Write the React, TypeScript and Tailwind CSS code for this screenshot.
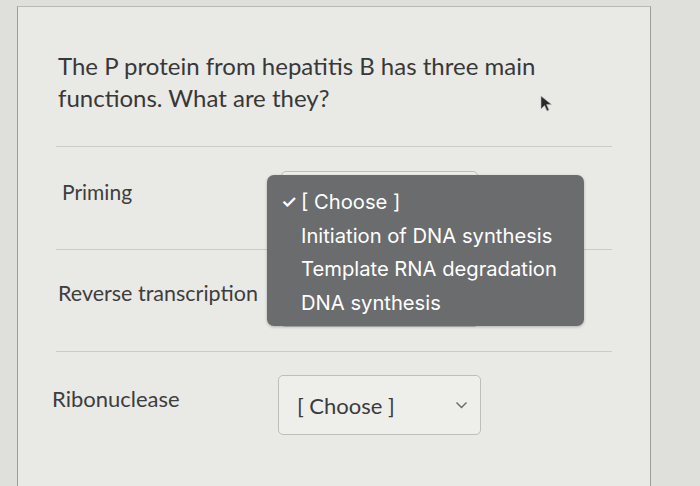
import React from "react";

const lato = { fontFamily: "Lato, 'Open Sans', sans-serif" } as const;

function Select({ w = "w-[203px]", covered = false }: { w?: string; covered?: boolean }) {
  return (
    <div className={`flex h-[60px] ${w} items-center justify-between rounded-[5px] border border-[#bdbdba] bg-[#eeeeeb] pl-[18px] pr-[12px]`}>
      <span className={`text-[22px] text-[#3b3b3b] ${covered ? "invisible" : ""}`}>[ Choose ]</span>
      <svg width="13" height="8" viewBox="0 0 13 8" fill="none">
        <path d="M1.5 1.5 L6.5 6.5 L11.5 1.5" stroke="#666" strokeWidth="1.4" />
      </svg>
    </div>
  );
}

export default function App() {
  return (
    <div
      className="relative h-[486px] w-[700px] overflow-hidden bg-[#dfdfdc] pt-[6px]"
      style={lato}
    >
      <div className="ml-[17px] h-[480px] w-[634px] border-x border-t border-x-[#9d9d9b] border-t-[#b9b9b7] bg-[#e9e9e6] px-[38px] pt-[43px]">
        <p className="w-[520px] pl-[2px] text-[24px] leading-[32px] text-[#383838]">
          The P protein from hepatitis B has three main functions. What are they?
        </p>
        <div className="mt-[32px] h-px bg-[#cbcbc8]" />

        <div className="flex h-[102px] items-start pt-[24px]">
          <span className="w-[225px] pl-[6px] pt-[7px] text-[21px] leading-[28px] text-[#3d3d3d]">Priming</span>
          <Select w="w-[197px]" covered />
        </div>
        <div className="h-px bg-[#cbcbc8]" />
        <div className="flex h-[101px] items-start pt-[17px]">
          <span className="w-[224px] pl-[2px] pt-[12px] text-[21.5px] leading-[28px] text-[#3d3d3d]">Reverse transcription</span>
          <Select w="w-[199px]" covered />
        </div>
        <div className="h-px bg-[#cbcbc8]" />
        <div className="flex items-start pt-[23px]">
          <span className="ml-[-4px] w-[226px] pt-[10px] text-[22px] leading-[28px] text-[#3d3d3d]">Ribonuclease</span>
          <Select />
        </div>
      </div>

      {/* dropdown menu */}
      <div
        className="absolute left-[267px] top-[175px] h-[151px] w-[317px] rounded-[7px] bg-[#6a6c6e] pt-[10px] text-[20.2px] leading-[33.5px] text-white shadow-[0_1px_3px_rgba(0,0,0,0.25)]"
        style={{ fontFamily: "Inter, 'Open Sans', sans-serif" }}
      >
        <div className="flex items-center">
          <span className="w-[34px] pl-[14px] text-[18px] font-semibold">✓</span>
          <span>[ Choose ]</span>
        </div>
        <div className="pl-[34px]">Initiation of DNA synthesis</div>
        <div className="pl-[34px]">Template RNA degradation</div>
        <div className="pl-[34px]">DNA synthesis</div>
      </div>

      {/* mouse cursor */}
      <svg className="absolute left-[540px] top-[95px]" width="14" height="18" viewBox="0 0 14 18">
        <path d="M1 1 L1 14 L4.5 10.5 L7 16 L9 15 L6.6 9.6 L11.5 9.6 Z" fill="#2a2a2a" stroke="#bbb" strokeWidth="0.6" />
      </svg>
    </div>
  );
}
